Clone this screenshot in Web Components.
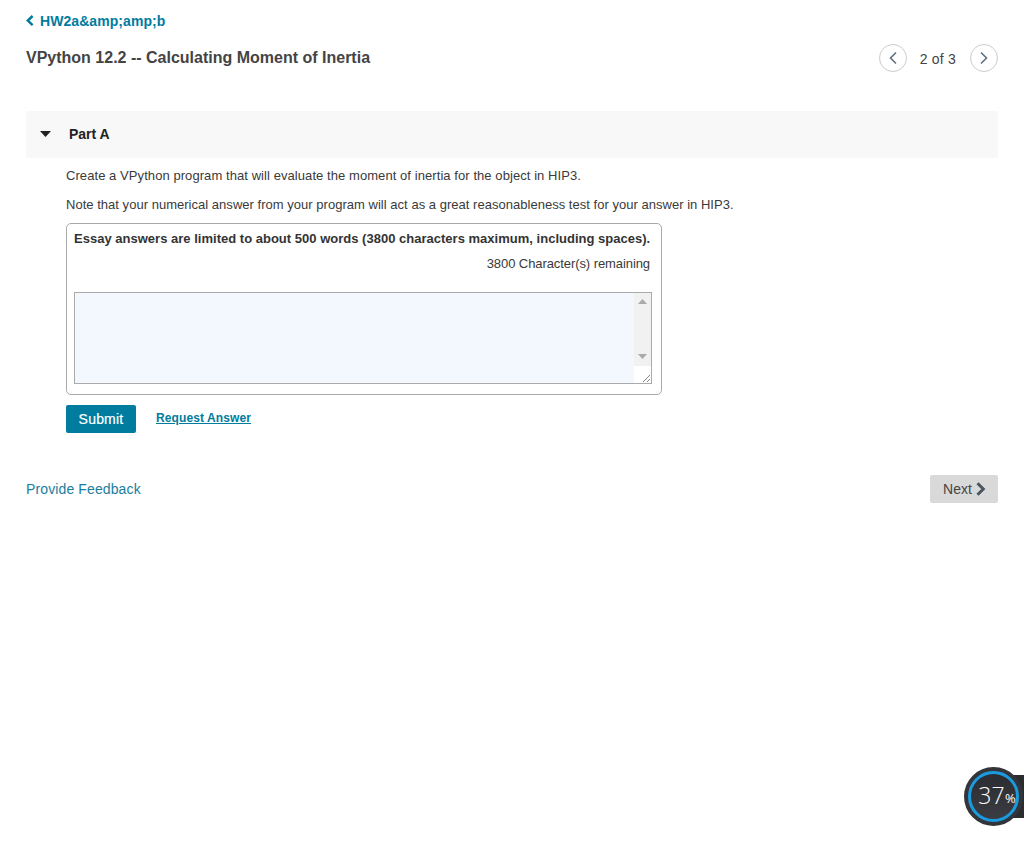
<!DOCTYPE html>
<html>
<head>
<meta charset="utf-8">
<title>VPython 12.2</title>
<style>
html, body { margin: 0; padding: 0; background: #fff; }
body { font-family: "Liberation Sans", Arial, sans-serif; font-size: 14px; color: #333; }
</style>
</head>
<body>
<mp-page>
    <mp-header back="HW2a&amp;amp;amp;b" title="VPython 12.2 -- Calculating Moment of Inertia" pager="2 of 3"></mp-header>
    <mp-part label="Part A">
        <p style="letter-spacing: .07px">Create a VPython program that will evaluate the moment of inertia for the object in HIP3.</p>
        <p style="letter-spacing: .025px">Note that your numerical answer from your program will act as a great reasonableness test for your answer in HIP3.</p>
        <mp-essay></mp-essay>
        <mp-actions></mp-actions>
    </mp-part>
    <mp-footer></mp-footer>
</mp-page>
<mp-gauge value="37"></mp-gauge>
<script>
class MpPage extends HTMLElement {
    constructor() {
        super();
        this.attachShadow({ mode: "open" }).innerHTML = `<style>
            :host { display: block; padding: 13px 26px 0 26px; }
        </style><slot></slot>`;
    }
}
class MpHeader extends HTMLElement {
    constructor() {
        super();
        let back = this.getAttribute("back");
        let title = this.getAttribute("title");
        let pager = this.getAttribute("pager");
        this.removeAttribute("title");
        let root = this.attachShadow({ mode: "open" });
        root.innerHTML = `<style>
            :host { display: block; }
            .back { display: flex; align-items: center; gap: 6px; height: 16px; color: #007c9e; font-weight: bold; font-size: 14px; letter-spacing: .07px; }
            .back svg { display: block; }
            .row { display: flex; justify-content: space-between; align-items: flex-start; margin-top: 12px; }
            h1 { margin: 7px 0 0; font-size: 16px; line-height: 20px; font-weight: bold; color: #444; letter-spacing: 0; }
            .pager { display: flex; align-items: center; gap: 13px; margin-top: 3px; color: #444; font-size: 14px; }
            .pager #p { margin-right: 1px; padding-top: 2px; letter-spacing: .2px; }
            .btn { width: 26px; height: 26px; border: 1px solid #ccc; border-radius: 50%; display: flex; align-items: center; justify-content: center; }
        </style>
        <div class="back"><svg width="8" height="12" viewBox="0 0 8 12"><path d="M6.6 1 1.8 5.6l4.8 4.6" fill="none" stroke="#007c9e" stroke-width="2.5"/></svg><span id="b"></span></div>
        <div class="row"><h1 id="t"></h1>
            <div class="pager">
                <span class="btn"><svg width="10" height="14" viewBox="0 0 10 14"><path d="M8 1.5 2.5 7 8 12.5" fill="none" stroke="#5f7080" stroke-width="1.6"/></svg></span>
                <span id="p"></span>
                <span class="btn"><svg width="10" height="14" viewBox="0 0 10 14"><path d="M2 1.5 7.5 7 2 12.5" fill="none" stroke="#5f7080" stroke-width="1.6"/></svg></span>
            </div>
        </div>`;
        root.getElementById("b").textContent = back;
        root.getElementById("t").textContent = title;
        root.getElementById("p").textContent = pager;
    }
}
class MpPart extends HTMLElement {
    constructor() {
        super();
        let root = this.attachShadow({ mode: "open" });
        root.innerHTML = `<style>
            :host { display: block; margin-top: 39px; }
            .bar { display: flex; align-items: center; box-sizing: border-box; height: 47px; background: #f8f8f8; padding: 0 0 2px 14px; gap: 18px; color: #222; font-weight: bold; font-size: 14px; }
            .bar svg { display: block; }
            .body { padding: 10px 0 0 40px; font-size: 13px; }
            ::slotted(p) { margin: 0 0 13px; font-size: 13px; line-height: 16px; color: #3a3a3a; }
        </style>
        <div class="bar"><svg width="11" height="6" viewBox="0 0 11 6"><path d="M0 0h11L5.5 6z" fill="#222"/></svg><span id="l"></span></div>
        <div class="body"><slot></slot></div>`;
        root.getElementById("l").textContent = this.getAttribute("label");
    }
}
class MpEssay extends HTMLElement {
    constructor() {
        super();
        this.attachShadow({ mode: "open" }).innerHTML = `<style>
            :host { display: block; box-sizing: border-box; width: 596px; height: 172px; margin-top: -3px; border: 1px solid #aaa; border-radius: 5px; padding: 7px 9px 10px 7px; font-size: 13px; color: #333; }
            .limit { font-weight: bold; line-height: 16px; letter-spacing: .012px; white-space: nowrap; }
            .left { text-align: right; line-height: 16px; margin: 9px 2px 0 0; letter-spacing: -.08px; color: #3a3a3a; }
            .area { display: flex; box-sizing: border-box; height: 92px; margin-top: 20px; border: 1px solid #aaa; background: #f3f8fe; }
            .fill { flex: 1; }
            .scroll { width: 17px; display: flex; flex-direction: column; background: #f1f1f1; }
            .track { flex: 1; display: flex; flex-direction: column; justify-content: space-between; align-items: center; padding: 6px 0 7px; }
            .grip { height: 17px; background: #fff; display: flex; align-items: flex-end; justify-content: flex-end; }
            .grip svg, .track svg { display: block; }
        </style>
        <div class="limit">Essay answers are limited to about 500 words (3800 characters maximum, including spaces).</div>
        <div class="left">3800 Character(s) remaining</div>
        <div class="area"><div class="fill"></div>
            <div class="scroll">
                <div class="track">
                    <svg width="9" height="5" viewBox="0 0 9 5"><path d="M4.5 0 9 5H0z" fill="#aaa"/></svg>
                    <svg width="9" height="5" viewBox="0 0 9 5"><path d="M0 0h9L4.5 5z" fill="#aaa"/></svg>
                </div>
                <div class="grip"><svg width="9" height="9" viewBox="0 0 9 9"><path d="M1 8 8 1M5 8l3-3" stroke="#888" stroke-width="1" fill="none"/></svg></div>
            </div>
        </div>`;
    }
}
class MpActions extends HTMLElement {
    constructor() {
        super();
        this.attachShadow({ mode: "open" }).innerHTML = `<style>
            :host { display: flex; align-items: center; gap: 20px; margin-top: 10px; }
            .submit { width: 70px; height: 28px; background: #007c9e; border-radius: 2px; color: #fff; font-size: 14px; -webkit-text-stroke: .2px #fff; letter-spacing: .2px; display: flex; align-items: center; justify-content: center; }
            a { color: #007c9e; font-size: 12px; font-weight: bold; text-decoration: underline; margin-top: -3px; letter-spacing: .1px; }
        </style>
        <span class="submit">Submit</span><a>Request Answer</a>`;
    }
}
class MpFooter extends HTMLElement {
    constructor() {
        super();
        this.attachShadow({ mode: "open" }).innerHTML = `<style>
            :host { display: flex; justify-content: space-between; align-items: center; margin-top: 42px; }
            a { color: #1a7d9e; font-size: 14px; letter-spacing: .12px; }
            .next { width: 68px; height: 28px; box-sizing: border-box; padding-left: 1px; background: #d9d9d9; border-radius: 2px; color: #444; font-size: 14px; display: flex; align-items: center; justify-content: center; gap: 3px; }
            svg { display: block; }
        </style>
        <a>Provide Feedback</a>
        <span class="next">Next<svg width="11" height="14" viewBox="0 0 11 14"><path d="M2.5 1.2 8.3 7 2.5 12.8" fill="none" stroke="#4a5560" stroke-width="3"/></svg></span>`;
    }
}
class MpGauge extends HTMLElement {
    constructor() {
        super();
        let value = this.getAttribute("value");
        this.attachShadow({ mode: "open" }).innerHTML = `<style>
            :host { position: fixed; left: 964px; top: 767px; width: 60px; height: 59px; display: block; }
            .tail { position: absolute; right: 0; top: 8px; width: 20px; height: 43px; background: #2a2c30; }
            .ring { position: absolute; left: 0; top: 0; width: 59px; height: 59px; box-sizing: border-box; border-radius: 50%; border: 4px solid #33353a; background: #33353a; }
            .inner { position: absolute; inset: 0; border-radius: 50%; border: 3px solid #1a9be0; background: linear-gradient(#2b2d33, #3a3c42); color: #fff; display: flex; align-items: center; justify-content: center; padding: 0 0 4px 7px; box-sizing: border-box; font-family: "Open Sans", sans-serif; font-size: 23px; font-weight: 300; letter-spacing: .3px; }
            small { font-size: 13px; font-weight: 400; letter-spacing: 0; margin: 6px 0 0 0; }
        </style>
        <div class="tail"></div>
        <div class="ring"><div class="inner">${value}<small>%</small></div></div>`;
    }
}
customElements.define("mp-page", MpPage);
customElements.define("mp-header", MpHeader);
customElements.define("mp-part", MpPart);
customElements.define("mp-essay", MpEssay);
customElements.define("mp-actions", MpActions);
customElements.define("mp-footer", MpFooter);
customElements.define("mp-gauge", MpGauge);
</script>
</body>
</html>
